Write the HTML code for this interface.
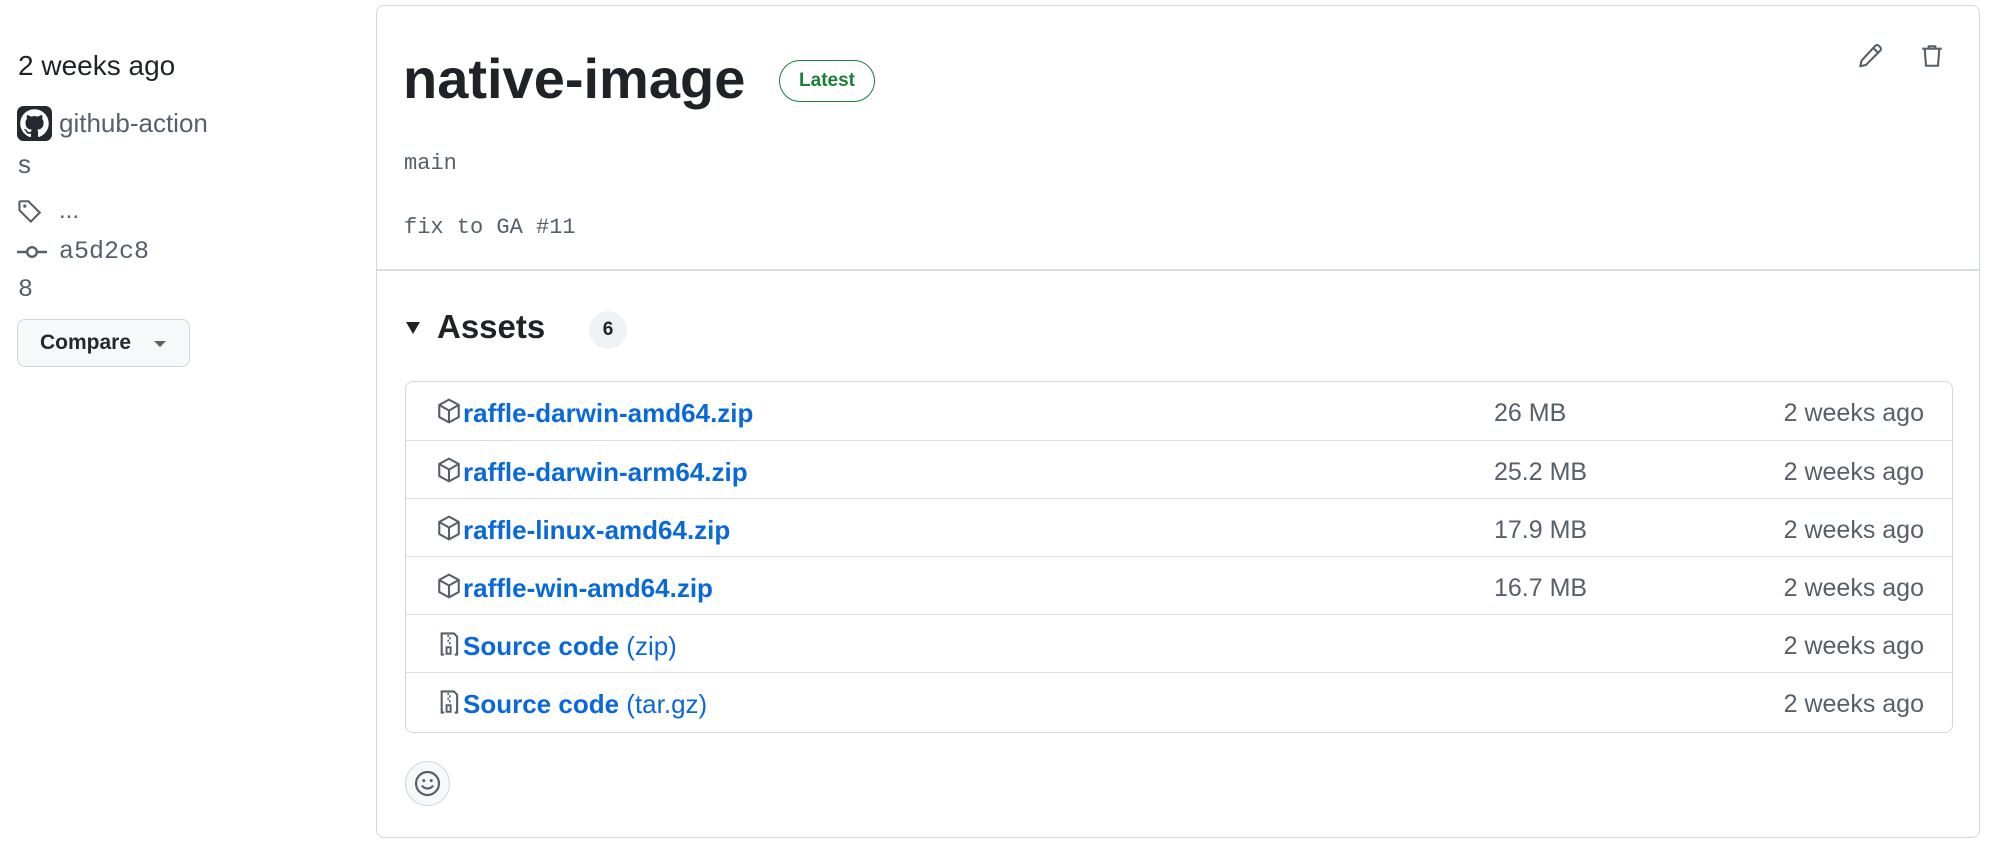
<!DOCTYPE html>
<html><head><meta charset="utf-8"><style>
*{margin:0;padding:0;box-sizing:border-box}
body{width:1999px;height:842px;background:#fff;position:relative;overflow:hidden;font-family:"Liberation Sans",Arial,sans-serif;color:#1f2328}
.a{position:absolute;white-space:nowrap}
.mono{font-family:"Liberation Mono",monospace}
.card{position:absolute;left:376px;top:5px;width:1604px;height:833px;border:1.5px solid #d0d7de;border-radius:8px}
.tbl{position:absolute;left:405px;top:381px;width:1548px;height:352px;border:1.5px solid #d0d7de;border-radius:8px}
.row{position:absolute;left:0;width:100%;height:58px;border-top:1.5px solid #d8dee4}
.row .n{position:absolute;left:57px;top:16px;font-size:26px;font-weight:bold;color:#0969da}
.row .n span{font-weight:normal}
.row .s{position:absolute;left:1088px;top:17px;font-size:25px;color:#57606a}
.row .d{position:absolute;right:28px;top:17px;font-size:25px;color:#57606a}
.row svg{position:absolute;left:30px;top:15px}
</style></head><body>
<div class="a" style="left:18px;top:50px;font-size:28px">2 weeks ago</div>
<svg class="a" style="left:17px;top:106px" width="35" height="35" viewBox="0 0 16 16"><rect width="16" height="16" rx="3" fill="#24292f"/><path fill="#fff" transform="translate(1.5 1.5) scale(0.8125)" d="M8 0C3.58 0 0 3.58 0 8c0 3.540 2.29 6.53 5.47 7.59.4.07.55-.17.55-.38 0-.19-.01-.82-.01-1.49-2.01.37-2.530-.49-2.690-.94-.09-.23-.48-.94-.82-1.13-.28-.15-.68-.52-.01-.53.63-.01 1.08.58 1.23.82.72 1.21 1.87.87 2.33.66.07-.52.28-.87.51-1.07-1.78-.2-3.64-.89-3.64-3.95 0-.87.31-1.59.82-2.15-.08-.2-.36-1.020.08-2.12 0 0 .67-.21 2.2.82.64-.18 1.32-.27 2-.27.68 0 1.36.09 2 .27 1.53-1.04 2.2-.82 2.2-.82.44 1.1.16 1.92.08 2.12.51.56.82 1.27.82 2.15 0 3.07-1.87 3.75-3.65 3.95.29.25.54.73.54 1.48 0 1.07-.01 1.93-.01 2.2 0 .21.15.46.55.38A8.013 8.013 0 0016 8c0-4.42-3.58-8-8-8z"/></svg>
<div class="a" style="left:59px;top:108px;font-size:26px;color:#57606a">github-action</div>
<div class="a" style="left:18px;top:149px;font-size:26px;color:#57606a">s</div>
<svg class="a" style="left:17px;top:198px" width="26" height="26" viewBox="0 0 16 16"><path fill="none" stroke="#57606a" stroke-width="1.3" d="M1.5 2.5v5l7 7 5.5-5.5-7-7h-5z"/><circle cx="4.8" cy="5" r="1" fill="#57606a"/></svg>
<div class="a" style="left:59px;top:197px;font-size:24px;color:#57606a">...</div>
<svg class="a" style="left:17px;top:240px" width="30" height="24" viewBox="0 0 20 16"><circle cx="10" cy="8" r="3.2" fill="none" stroke="#57606a" stroke-width="1.6"/><path d="M0 8h6.8M13.2 8H20" stroke="#57606a" stroke-width="1.6"/></svg>
<div class="a mono" style="left:59px;top:237px;font-size:25px;color:#57606a">a5d2c8</div>
<div class="a mono" style="left:18px;top:275px;font-size:25px;color:#57606a">8</div>
<div class="a" style="left:17px;top:319px;width:173px;height:48px;border:1.5px solid #d0d7de;border-radius:8px;background:#f6f8fa"></div>
<div class="a" style="left:40px;top:331px;font-size:21px;font-weight:bold;color:#24292f">Compare</div>
<div class="a" style="left:154px;top:341px;width:0;height:0;border-left:6px solid transparent;border-right:6px solid transparent;border-top:6px solid #57606a"></div>

<div class="card"></div>
<div class="a" style="left:403px;top:46px;font-size:56px;font-weight:bold;color:#1f2328">native-image</div>
<div class="a" style="left:779px;top:60px;width:96px;height:42px;border:1.5px solid #1a7f37;border-radius:21px;color:#1a7f37;font-size:19px;font-weight:bold;text-align:center;line-height:39px">Latest</div>
<svg class="a" style="left:1857px;top:43px" width="26" height="26" viewBox="0 0 16 16"><path fill="none" stroke="#57606a" stroke-width="1.3" stroke-linejoin="round" d="M11.3 1.7a1.5 1.5 0 012.1 0l.9.9a1.5 1.5 0 010 2.1L5.5 13.5 2 14.3l.8-3.5z M10 3l3 3"/></svg>
<svg class="a" style="left:1919px;top:42px" width="26" height="28" viewBox="0 0 16 16"><path fill="none" stroke="#57606a" stroke-width="1.3" d="M2 3.5h12M6 3.5V2h4v1.5M3.5 3.5l.8 10.5h7.4l.8-10.5"/></svg>
<div class="a mono" style="left:404px;top:151px;font-size:22px;color:#57606a">main</div>
<div class="a mono" style="left:404px;top:215px;font-size:22px;color:#57606a">fix to GA #11</div>
<div class="a" style="left:377px;top:269px;width:1602px;height:1.5px;background:#d8dee4"></div>
<div class="a" style="left:406px;top:322px;width:0;height:0;border-left:7px solid transparent;border-right:7px solid transparent;border-top:12px solid #1f2328"></div>
<div class="a" style="left:437px;top:308px;font-size:33px;font-weight:bold">Assets</div>
<div class="a" style="left:589px;top:311px;width:38px;height:38px;border-radius:19px;background:#eff2f5;font-size:19px;text-align:center;line-height:38px;font-weight:bold;color:#1f2328">6</div>

<div class="tbl">
<div class="row" style="top:0;border-top:none"><svg width="26" height="28" viewBox="0 0 16 16"><path fill="none" stroke="#57606a" stroke-width="1.3" stroke-linejoin="round" d="M8 1l6 3.3v7.4L8 15l-6-3.3V4.3z M2 4.3L8 7.7l6-3.4M8 7.7V15"/></svg><div class="n">raffle-darwin-amd64.zip</div><div class="s">26 MB</div><div class="d">2 weeks ago</div></div>
<div class="row" style="top:58px"><svg width="26" height="28" viewBox="0 0 16 16"><path fill="none" stroke="#57606a" stroke-width="1.3" stroke-linejoin="round" d="M8 1l6 3.3v7.4L8 15l-6-3.3V4.3z M2 4.3L8 7.7l6-3.4M8 7.7V15"/></svg><div class="n">raffle-darwin-arm64.zip</div><div class="s">25.2 MB</div><div class="d">2 weeks ago</div></div>
<div class="row" style="top:116px"><svg width="26" height="28" viewBox="0 0 16 16"><path fill="none" stroke="#57606a" stroke-width="1.3" stroke-linejoin="round" d="M8 1l6 3.3v7.4L8 15l-6-3.3V4.3z M2 4.3L8 7.7l6-3.4M8 7.7V15"/></svg><div class="n">raffle-linux-amd64.zip</div><div class="s">17.9 MB</div><div class="d">2 weeks ago</div></div>
<div class="row" style="top:174px"><svg width="26" height="28" viewBox="0 0 16 16"><path fill="none" stroke="#57606a" stroke-width="1.3" stroke-linejoin="round" d="M8 1l6 3.3v7.4L8 15l-6-3.3V4.3z M2 4.3L8 7.7l6-3.4M8 7.7V15"/></svg><div class="n">raffle-win-amd64.zip</div><div class="s">16.7 MB</div><div class="d">2 weeks ago</div></div>
<div class="row" style="top:232px"><svg width="26" height="28" viewBox="0 0 16 16"><path fill="none" stroke="#57606a" stroke-width="1.3" d="M5 14.5H3.5V1.5H11L13 3.5v11h-1.5 M7 3h1M8 4.5h1M7 6h1M8 7.5h1"/><rect x="6.5" y="10" width="2.5" height="4" fill="none" stroke="#57606a" stroke-width="1.2"/></svg><div class="n">Source code <span>(zip)</span></div><div class="d">2 weeks ago</div></div>
<div class="row" style="top:290px"><svg width="26" height="28" viewBox="0 0 16 16"><path fill="none" stroke="#57606a" stroke-width="1.3" d="M5 14.5H3.5V1.5H11L13 3.5v11h-1.5 M7 3h1M8 4.5h1M7 6h1M8 7.5h1"/><rect x="6.5" y="10" width="2.5" height="4" fill="none" stroke="#57606a" stroke-width="1.2"/></svg><div class="n">Source code <span>(tar.gz)</span></div><div class="d">2 weeks ago</div></div>
</div>

<div class="a" style="left:405px;top:761px;width:45px;height:45px;border-radius:50%;border:1.5px solid #d0d7de;background:#f6f8fa"></div>
<svg class="a" style="left:414px;top:770px" width="27" height="27" viewBox="0 0 16 16"><circle cx="8" cy="8" r="6.8" fill="none" stroke="#57606a" stroke-width="1.3"/><circle cx="5.8" cy="6.3" r=".9" fill="#57606a"/><circle cx="10.2" cy="6.3" r=".9" fill="#57606a"/><path d="M5 9.6c1.5 1.8 4.5 1.8 6 0" fill="none" stroke="#57606a" stroke-width="1.3" stroke-linecap="round"/></svg>
</body></html>
